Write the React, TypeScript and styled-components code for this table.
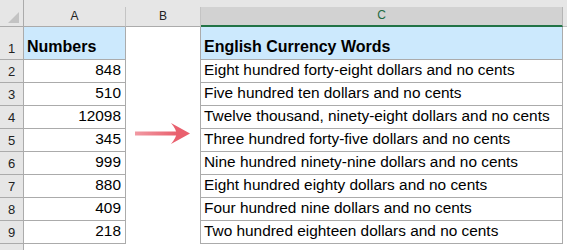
import React from "react";
import styled, { createGlobalStyle } from "styled-components";

const rows = [
  { n: 848, words: "Eight hundred forty-eight dollars and no cents" },
  { n: 510, words: "Five hundred ten dollars and no cents" },
  { n: 12098, words: "Twelve thousand, ninety-eight dollars and no cents" },
  { n: 345, words: "Three hundred forty-five dollars and no cents" },
  { n: 999, words: "Nine hundred ninety-nine dollars and no cents" },
  { n: 880, words: "Eight hundred eighty dollars and no cents" },
  { n: 409, words: "Four hundred nine dollars and no cents" },
  { n: 218, words: "Two hundred eighteen dollars and no cents" },
];

const GRID = "#ababab";
const HEAD_BG = "#e6e6e6";

const Global = createGlobalStyle`
  html, body {
    margin: 0;
    padding: 0;
    background: #ffffff;
  }
  body {
    font-family: "Liberation Sans", Arial, sans-serif;
    overflow: hidden;
  }
`;

const Sheet = styled.div`
  position: relative;
  width: 567px;
  height: 250px;
  display: grid;
  grid-template-columns: 24px 102px 75px 362px 1fr;
  grid-template-rows: 27px 33px repeat(8, 23px) 1fr;
  background: #ffffff;
  overflow: hidden;
`;

const Corner = styled.div`
  position: relative;
  background: ${HEAD_BG};
  border-right: 1px solid ${GRID};
  border-bottom: 1px solid ${GRID};
  box-sizing: border-box;

  &::after {
    content: "";
    position: absolute;
    right: 4px;
    bottom: 3px;
    width: 0;
    height: 0;
    border-left: 11px solid transparent;
    border-bottom: 11px solid #c3c3c3;
  }
`;

const ColHeadSlot = styled.div`
  background: ${HEAD_BG};
  padding-top: 7px;
  box-sizing: border-box;
  display: flex;
`;

const ColHead = styled.div<{ $selected?: boolean }>`
  flex: 1;
  display: flex;
  align-items: center;
  justify-content: center;
  padding-bottom: 2px;
  font-size: 12px;
  color: ${(p) => (p.$selected ? "#1e6b43" : "#222222")};
  background: ${(p) => (p.$selected ? "#d2d2d2" : HEAD_BG)};
  border-right: 1px solid ${(p) => (p.$selected ? "#b5b5b5" : "#c4c4c4")};
  border-bottom: ${(p) => (p.$selected ? "2px solid #217346" : `1px solid ${GRID}`)};
`;

const HeadFiller = styled.div`
  background: ${HEAD_BG};
  border-bottom: 1px solid #c4c4c4;
`;

const RowHead = styled.div`
  background: ${HEAD_BG};
  border-right: 1px solid ${GRID};
  border-bottom: 1px solid ${GRID};
  box-sizing: border-box;
  display: flex;
  align-items: flex-end;
  justify-content: center;
  padding-bottom: 3px;
  font-size: 13px;
  color: #222222;
`;

const RowHeadTail = styled.div`
  background: ${HEAD_BG};
  border-right: 1px solid ${GRID};
`;

const Cell = styled.div<{ $align?: "left" | "right"; $title?: boolean }>`
  box-sizing: border-box;
  border-right: 1px solid ${GRID};
  border-bottom: 1px solid ${GRID};
  background: ${(p) => (p.$title ? "#cce9fd" : "#ffffff")};
  display: flex;
  align-items: flex-end;
  justify-content: ${(p) => (p.$align === "right" ? "flex-end" : "flex-start")};
  padding: 0 4px 3px 3px;
  font-size: ${(p) => (p.$title ? "16px" : "15.4px")};
  font-weight: ${(p) => (p.$title ? 700 : 400)};
  color: #000000;
  white-space: nowrap;
`;

const Gap = styled.div<{ $edge?: boolean }>`
  box-sizing: border-box;
  border-right: ${(p) => (p.$edge ? `1px solid ${GRID}` : "none")};
  background: #ffffff;
`;

const Blank = styled.div`
  background: #ffffff;
`;

const Arrow = styled.svg`
  position: absolute;
  left: 133px;
  top: 120px;
  width: 60px;
  height: 28px;
`;

export default function App() {
  return (
    <>
      <Global />
      <Sheet>
        <Corner />
        <ColHeadSlot>
          <ColHead>A</ColHead>
        </ColHeadSlot>
        <ColHeadSlot>
          <ColHead>B</ColHead>
        </ColHeadSlot>
        <ColHeadSlot>
          <ColHead $selected>C</ColHead>
        </ColHeadSlot>
        <HeadFiller />

        <RowHead>1</RowHead>
        <Cell $title>Numbers</Cell>
        <Gap $edge />
        <Cell $title>English Currency Words</Cell>
        <Blank />

        {rows.map((r, i) => (
          <React.Fragment key={r.n}>
            <RowHead>{i + 2}</RowHead>
            <Cell $align="right">{r.n}</Cell>
            <Gap $edge />
            <Cell>{r.words}</Cell>
            <Blank />
          </React.Fragment>
        ))}

        <RowHeadTail />
        <Blank />
        <Blank />
        <Blank />
        <Blank />

        <Arrow viewBox="0 0 60 28">
          <defs>
            <linearGradient id="shaft" x1="0" x2="1" y1="0" y2="0">
              <stop offset="0" stopColor="#f19aa3" />
              <stop offset="1" stopColor="#e9606e" />
            </linearGradient>
          </defs>
          <rect x="2" y="11.5" width="42" height="4" fill="url(#shaft)" />
          <path d="M57 13.5 L38 3 Q43 9 43.5 13.5 Q43 18 38 24 Z" fill="#e9606e" />
        </Arrow>
      </Sheet>
    </>
  );
}
